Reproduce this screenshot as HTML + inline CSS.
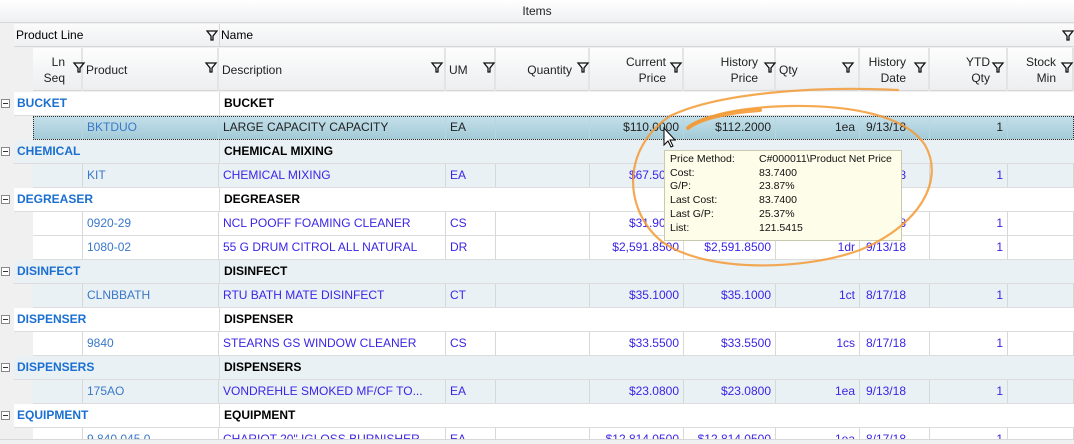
<!DOCTYPE html>
<html><head><meta charset="utf-8"><style>
*{box-sizing:border-box;margin:0;padding:0}
body{width:1074px;height:444px;overflow:hidden;background:#f0f0f0;font-family:"Liberation Sans",sans-serif;font-size:12px;position:relative}
.title{position:absolute;left:0;top:0;width:1074px;height:23px;background:linear-gradient(#fff,#eef0f2);border-bottom:1px solid #d8d8d8;text-align:center;line-height:22px;color:#222}
.gh{position:absolute;left:14px;top:24px;width:1060px;height:23px;background:linear-gradient(#fbfbfb,#eef0f2);border-bottom:1px solid #d6d6d6}
.ch{position:absolute;left:33px;top:48px;width:1041px;height:43px;display:flex;background:linear-gradient(#fdfdfd,#eceef0);border-bottom:1px solid #d6d6d6}
.ch div{position:relative;border-right:2px solid #e2e4e6;height:43px;padding:0 16px 0 3px;color:#222;line-height:16px}
.ch .rt{text-align:right}
.f{position:absolute;top:0;width:12px;height:12px}
.row{position:absolute;left:0;width:1074px;height:24px}
.g{position:absolute;left:14px;top:0;right:0;height:24px;border-bottom:1px solid #dcdcdc;font-weight:bold;line-height:22px}
.g span{position:absolute;top:0}
.exp{position:absolute;left:1px;top:7px;width:9px;height:9px;border:1px solid #888;background:#fff}
.exp:after{content:"";position:absolute;left:1px;top:3px;width:5px;height:1px;background:#333}
.d{position:absolute;left:33px;top:0;right:0;height:24px;display:flex;border-bottom:1px solid #dcdcdc;line-height:23px;color:#3b24e6}
.d div{border-right:1px solid #d8d8d8;padding:0 4px;white-space:nowrap;overflow:hidden}
.d .r{text-align:right}
.d .dt{text-align:right;padding-right:23px}
.w{background:#fff}.b{background:#eaf1f5}
.sel{background:linear-gradient(#c4e0ea,#a3cbd8);outline:1px dotted #333;outline-offset:-1px;color:#222}
.sel div{border-right-color:#b8d6e0}
.tip{position:absolute;left:664px;top:150px;width:238px;height:91px;background:#fdfde9;border:1px solid #c9c9b0;font-size:10.5px;color:#111;padding:2px 5px;line-height:13.7px}
.tip span{display:inline-block;width:89px}
</style></head><body>
<div class="title">Items</div>
<div class="gh"><span style="position:absolute;left:2px;top:4px">Product Line</span><svg class="f" style="left:192px;top:6px" viewBox="0 0 12 12"><path d="M1 1h10L7 6v4H5V6z" fill="none" stroke="#111" stroke-width="1.3"/></svg><div style="position:absolute;left:205px;top:0;width:1px;height:23px;background:#d6d6d6"></div><span style="position:absolute;left:207px;top:4px">Name</span><svg class="f" style="left:1048px;top:6px" viewBox="0 0 12 12"><path d="M1 1h10L7 6v4H5V6z" fill="none" stroke="#111" stroke-width="1.3"/></svg></div>
<div class="ch">
<div class="rt" style="width:50px;padding-top:6px">Ln<br>Seq</div>
<div style="width:136px;padding-top:14px">Product</div>
<div style="width:227px;padding-top:14px">Description</div>
<div style="width:50px;padding-top:14px">UM</div>
<div class="rt" style="width:94px;padding-top:14px">Quantity</div>
<div class="rt" style="width:94px;padding-top:6px">Current<br>Price</div>
<div class="rt" style="width:92px;padding-top:6px">History<br>Price</div>
<div style="width:84px;padding-top:14px">Qty</div>
<div class="rt" style="width:70px;padding-top:6px;padding-right:22px">History<br>Date</div>
<div class="rt" style="width:78px;padding-top:6px">YTD<br>Qty</div>
<div class="rt" style="width:66px;padding-top:6px">Stock<br>Min</div>
</div>
<svg style="position:absolute;left:0;top:48px" width="1074" height="43">
<g fill="none" stroke="#111" stroke-width="1.3">
<path d="M74 15h10l-4 5v4h-2v-4z"/><path d="M206 15h10l-4 5v4h-2v-4z"/><path d="M432 15h10l-4 5v4h-2v-4z"/><path d="M484 15h10l-4 5v4h-2v-4z"/><path d="M578 15h10l-4 5v4h-2v-4z"/><path d="M671 15h10l-4 5v4h-2v-4z"/><path d="M765 15h10l-4 5v4h-2v-4z"/><path d="M843 15h10l-4 5v4h-2v-4z"/><path d="M915 15h10l-4 5v4h-2v-4z"/><path d="M993 15h10l-4 5v4h-2v-4z"/><path d="M1062 15h10l-4 5v4h-2v-4z"/>
</g></svg>

<div class="row" style="top:92px"><div class="exp"></div><div class="g w"><span style="left:3px;color:#1a6fd0">BUCKET</span><span style="left:205px;width:1px;height:24px;background:#dcdcdc"></span><span style="left:210px">BUCKET</span></div></div>
<div class="row" style="top:116px"><div class="d sel"><div style="width:50px"></div><div style="width:136px;color:#3a78c8">BKTDUO</div><div style="width:227px">LARGE CAPACITY CAPACITY</div><div style="width:50px">EA</div><div style="width:94px"></div><div class="r" style="width:94px">$110.0000</div><div class="r" style="width:92px">$112.2000</div><div class="r" style="width:84px">1ea</div><div class="dt" style="width:70px">9/13/18</div><div class="r" style="width:78px">1</div><div style="width:66px"></div></div></div>

<div class="row" style="top:140px"><div class="exp"></div><div class="g b"><span style="left:3px;color:#1a6fd0">CHEMICAL</span><span style="left:205px;width:1px;height:24px;background:#dcdcdc"></span><span style="left:210px">CHEMICAL MIXING</span></div></div>
<div class="row" style="top:164px"><div class="d b"><div style="width:50px"></div><div style="width:136px;color:#3a78c8">KIT</div><div style="width:227px">CHEMICAL MIXING</div><div style="width:50px">EA</div><div style="width:94px"></div><div class="r" style="width:94px">$67.5000</div><div class="r" style="width:92px">$67.5000</div><div class="r" style="width:84px">1ea</div><div class="dt" style="width:70px">9/13/18</div><div class="r" style="width:78px">1</div><div style="width:66px"></div></div></div>

<div class="row" style="top:188px"><div class="exp"></div><div class="g w"><span style="left:3px;color:#1a6fd0">DEGREASER</span><span style="left:205px;width:1px;height:24px;background:#dcdcdc"></span><span style="left:210px">DEGREASER</span></div></div>
<div class="row" style="top:212px"><div class="d w"><div style="width:50px"></div><div style="width:136px;color:#3a78c8">0920-29</div><div style="width:227px">NCL POOFF FOAMING CLEANER</div><div style="width:50px">CS</div><div style="width:94px"></div><div class="r" style="width:94px">$31.9000</div><div class="r" style="width:92px">$31.9000</div><div class="r" style="width:84px">1cs</div><div class="dt" style="width:70px">9/13/18</div><div class="r" style="width:78px">1</div><div style="width:66px"></div></div></div>
<div class="row" style="top:236px"><div class="d w"><div style="width:50px"></div><div style="width:136px;color:#3a78c8">1080-02</div><div style="width:227px">55 G DRUM CITROL ALL NATURAL</div><div style="width:50px">DR</div><div style="width:94px"></div><div class="r" style="width:94px">$2,591.8500</div><div class="r" style="width:92px">$2,591.8500</div><div class="r" style="width:84px">1dr</div><div class="dt" style="width:70px">9/13/18</div><div class="r" style="width:78px">1</div><div style="width:66px"></div></div></div>

<div class="row" style="top:260px"><div class="exp"></div><div class="g b"><span style="left:3px;color:#1a6fd0">DISINFECT</span><span style="left:205px;width:1px;height:24px;background:#dcdcdc"></span><span style="left:210px">DISINFECT</span></div></div>
<div class="row" style="top:284px"><div class="d b"><div style="width:50px"></div><div style="width:136px;color:#3a78c8">CLNBBATH</div><div style="width:227px">RTU BATH MATE DISINFECT</div><div style="width:50px">CT</div><div style="width:94px"></div><div class="r" style="width:94px">$35.1000</div><div class="r" style="width:92px">$35.1000</div><div class="r" style="width:84px">1ct</div><div class="dt" style="width:70px">8/17/18</div><div class="r" style="width:78px">1</div><div style="width:66px"></div></div></div>

<div class="row" style="top:308px"><div class="exp"></div><div class="g w"><span style="left:3px;color:#1a6fd0">DISPENSER</span><span style="left:205px;width:1px;height:24px;background:#dcdcdc"></span><span style="left:210px">DISPENSER</span></div></div>
<div class="row" style="top:332px"><div class="d w"><div style="width:50px"></div><div style="width:136px;color:#3a78c8">9840</div><div style="width:227px">STEARNS GS WINDOW CLEANER</div><div style="width:50px">CS</div><div style="width:94px"></div><div class="r" style="width:94px">$33.5500</div><div class="r" style="width:92px">$33.5500</div><div class="r" style="width:84px">1cs</div><div class="dt" style="width:70px">8/17/18</div><div class="r" style="width:78px">1</div><div style="width:66px"></div></div></div>

<div class="row" style="top:356px"><div class="exp"></div><div class="g b"><span style="left:3px;color:#1a6fd0">DISPENSERS</span><span style="left:205px;width:1px;height:24px;background:#dcdcdc"></span><span style="left:210px">DISPENSERS</span></div></div>
<div class="row" style="top:380px"><div class="d b"><div style="width:50px"></div><div style="width:136px;color:#3a78c8">175AO</div><div style="width:227px">VONDREHLE SMOKED MF/CF TO...</div><div style="width:50px">EA</div><div style="width:94px"></div><div class="r" style="width:94px">$23.0800</div><div class="r" style="width:92px">$23.0800</div><div class="r" style="width:84px">1ea</div><div class="dt" style="width:70px">9/13/18</div><div class="r" style="width:78px">1</div><div style="width:66px"></div></div></div>

<div class="row" style="top:404px"><div class="exp"></div><div class="g w"><span style="left:3px;color:#1a6fd0">EQUIPMENT</span><span style="left:205px;width:1px;height:24px;background:#dcdcdc"></span><span style="left:210px">EQUIPMENT</span></div></div>
<div class="row" style="top:428px;height:11px;overflow:hidden"><div class="d w"><div style="width:50px"></div><div style="width:136px;color:#3a78c8">9 840 045 0</div><div style="width:227px">CHARIOT 20" IGLOSS BURNISHER</div><div style="width:50px">EA</div><div style="width:94px"></div><div class="r" style="width:94px">$12,814.0500</div><div class="r" style="width:92px">$12,814.0500</div><div class="r" style="width:84px">1ea</div><div class="dt" style="width:70px">8/17/18</div><div class="r" style="width:78px">1</div><div style="width:66px"></div></div></div>
<div style="position:absolute;left:0;top:439px;width:1074px;height:5px;background:#eef0f2;border-top:1px solid #d8d8d8"></div>

<div class="tip"><span>Price Method:</span>C#000011\Product Net Price<br><span>Cost:</span>83.7400<br><span>G/P:</span>23.87%<br><span>Last Cost:</span>83.7400<br><span>Last G/P:</span>25.37%<br><span>List:</span>121.5415</div>

<svg style="position:absolute;left:0;top:0" width="1074" height="444">
<g fill="none" stroke="#f39a35" stroke-linecap="round">
<path d="M898 90 C820 86 720 92 670 116 C620 150 625 210 660 240 C700 272 800 272 860 250 C920 225 945 180 925 145 C905 115 850 105 790 106 C740 107 705 115 688 128" stroke-width="2.2" opacity="0.85"/>
<path d="M688 128 C700 118 730 112 760 110" stroke-width="4" opacity="0.9"/>
</g>
<path d="M664 128v17l4-4 3 6 2-1-3-6h5z" fill="#fff" stroke="#000" stroke-width="1"/>
</svg>
</body></html>
